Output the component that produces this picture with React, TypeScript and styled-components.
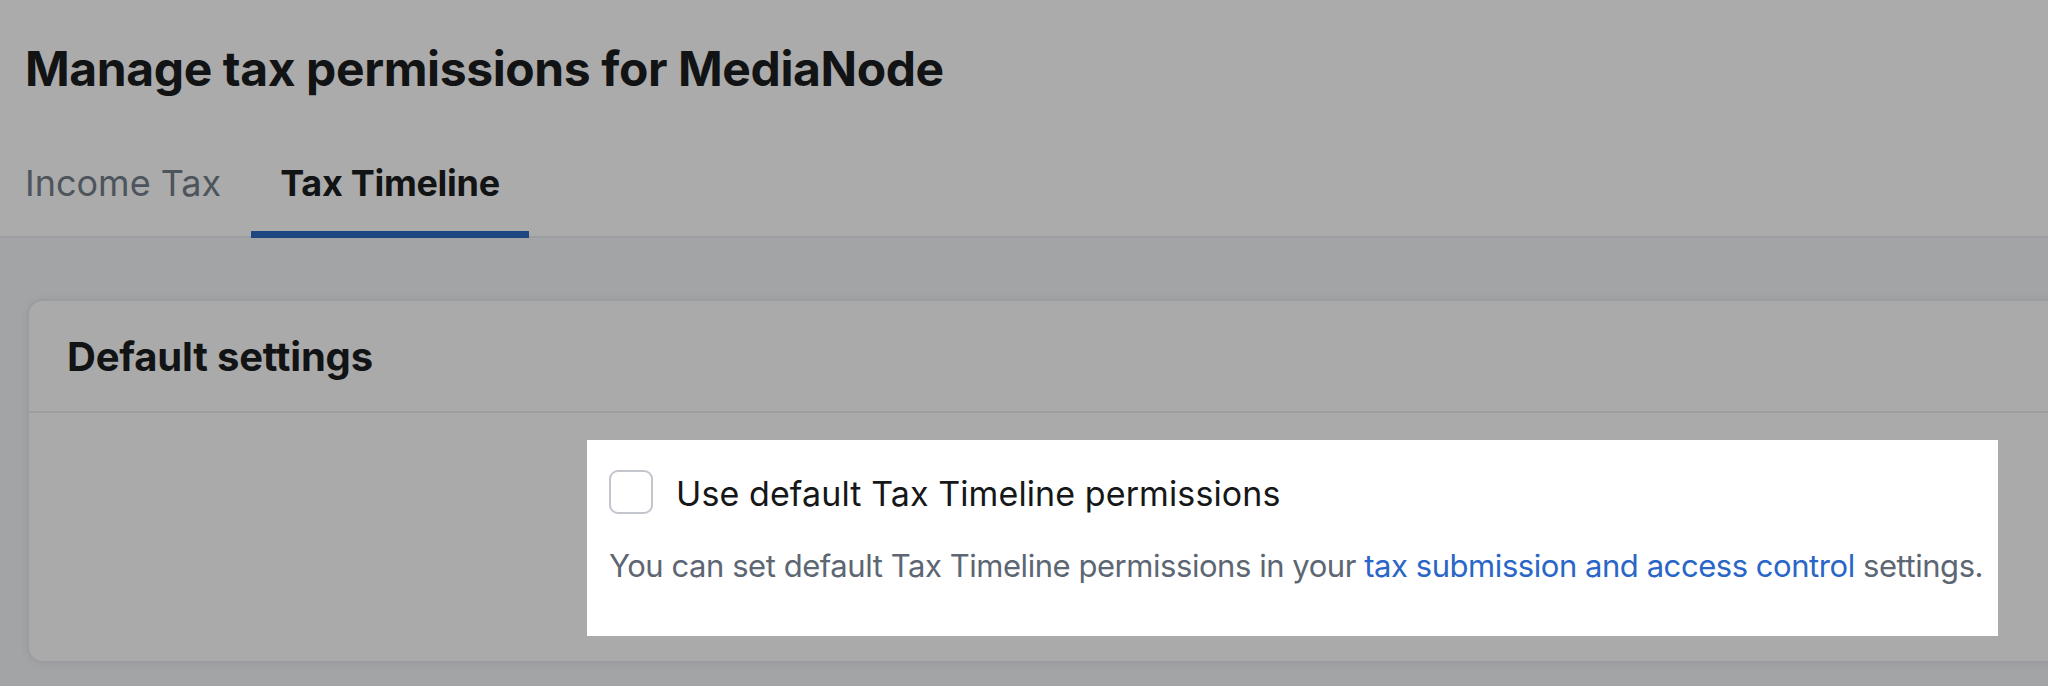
import React from "react";
import styled, { createGlobalStyle } from "styled-components";

const GlobalStyle = createGlobalStyle`
  html, body {
    margin: 0;
    padding: 0;
    background: #a3a4a6;
  }
  body {
    font-family: Inter, "Liberation Sans", sans-serif;
    -webkit-font-smoothing: antialiased;
  }
  #root {
    width: 2048px;
    height: 686px;
    overflow: hidden;
  }
`;

const Page = styled.div`
  width: 2048px;
  height: 686px;
  overflow: hidden;
  background: #a3a4a6;
`;

const Header = styled.header`
  background: #ababab;
  padding: 40px 0 0 25px;
  border-bottom: 2px solid #9d9ea1;
`;

const Title = styled.h1`
  margin: 0;
  font-size: 48px;
  line-height: 58px;
  font-weight: 700;
  color: #121314;
  letter-spacing: -0.4px;
`;

const TabList = styled.nav`
  display: flex;
  margin-top: 63px;
  margin-bottom: -2px;
`;

const Tab = styled.div<{ $active?: boolean }>`
  padding: 0 29px 26px;
  font-size: 36px;
  line-height: 44px;
  font-weight: ${(p) => (p.$active ? 700 : 400)};
  letter-spacing: ${(p) => (p.$active ? "-0.3px" : "0")};
  color: ${(p) => (p.$active ? "#121314" : "#4d545c")};
  border-bottom: 7px solid ${(p) => (p.$active ? "#1e4680" : "transparent")};
  &:first-child {
    padding-left: 0;
    padding-right: 30px;
  }
`;

const Main = styled.main`
  padding: 61px 0 0 27px;
`;

const Card = styled.section`
  width: 2200px;
  background: #aaaaaa;
  border: 2px solid #9c9da0;
  border-radius: 16px;
  box-shadow: 0 1px 8px rgba(0, 0, 0, 0.06);
`;

const CardHeader = styled.div`
  padding: 32px 38px 30px;
  border-bottom: 2px solid #9d9ea1;
`;

const CardTitle = styled.h2`
  margin: 0;
  font-size: 40px;
  line-height: 48px;
  font-weight: 700;
  color: #121314;
  letter-spacing: -0.2px;
`;

const CardBody = styled.div`
  padding: 27px 0 25px 558px;
`;

const Spotlight = styled.div`
  width: 1411px;
  box-sizing: border-box;
  background: #ffffff;
  padding: 28px 22px 50px;
`;

const CheckRow = styled.label`
  display: flex;
  align-items: center;
  gap: 23px;
`;

const CheckBox = styled.span`
  width: 44px;
  height: 44px;
  box-sizing: border-box;
  border: 2px solid #c3c7cd;
  border-radius: 9px;
  background: #ffffff;
  flex: none;
`;

const CheckLabel = styled.span`
  font-size: 34px;
  line-height: 44px;
  color: #161718;
  margin-top: 4px;
  letter-spacing: 0.1px;
`;

const Help = styled.p`
  margin: 30px 0 0;
  font-size: 31px;
  line-height: 40px;
  letter-spacing: -0.45px;
  color: #5d6673;
  white-space: nowrap;
`;

const Link = styled.a`
  color: #2a66c7;
  text-decoration: none;
`;

export default function App() {
  return (
    <>
      <GlobalStyle />
      <Page>
        <Header>
          <Title>Manage tax permissions for MediaNode</Title>
          <TabList>
            <Tab>Income Tax</Tab>
            <Tab $active>Tax Timeline</Tab>
          </TabList>
        </Header>
        <Main>
          <Card>
            <CardHeader>
              <CardTitle>Default settings</CardTitle>
            </CardHeader>
            <CardBody>
              <Spotlight>
                <CheckRow>
                  <CheckBox />
                  <CheckLabel>Use default Tax Timeline permissions</CheckLabel>
                </CheckRow>
                <Help>
                  You can set default Tax Timeline permissions in your{" "}
                  <Link href="#">tax submission and access control</Link> settings.
                </Help>
              </Spotlight>
            </CardBody>
          </Card>
        </Main>
      </Page>
    </>
  );
}
